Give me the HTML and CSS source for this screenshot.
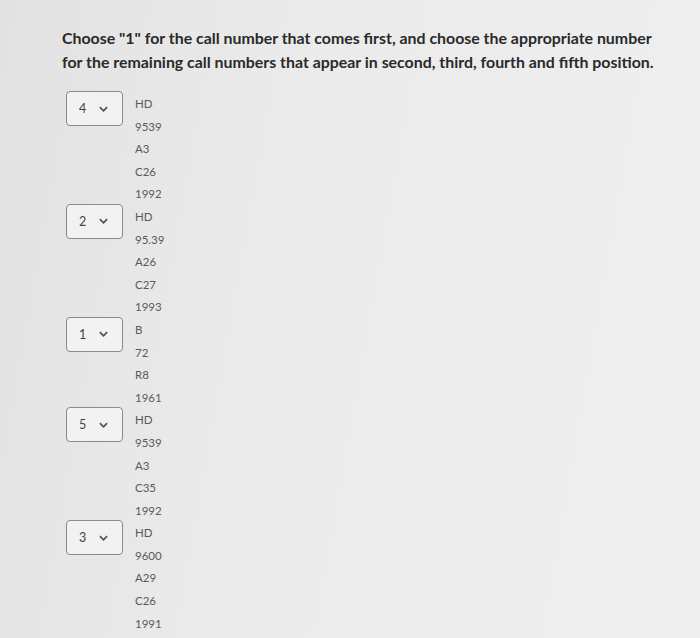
FILE: index.html
```html
<!DOCTYPE html>
<html>
<head>
<meta charset="utf-8">
<link rel="stylesheet" href="styles.css">
</head>
<body>
<div class="page">
  <p class="prompt">Choose "1" for the call number that comes first, and choose the appropriate number for the remaining call numbers that appear in second, third, fourth and fifth position.</p>
  <div class="items">
    <div class="item">
      <div class="select"><span>4</span><svg viewBox="0 0 10 6" class="chev"><path d="M1 1 L5 5 L9 1" /></svg></div>
      <div class="call"><div>HD</div><div>9539</div><div>A3</div><div>C26</div><div>1992</div></div>
    </div>
    <div class="item">
      <div class="select"><span>2</span><svg viewBox="0 0 10 6" class="chev"><path d="M1 1 L5 5 L9 1" /></svg></div>
      <div class="call"><div>HD</div><div>95.39</div><div>A26</div><div>C27</div><div>1993</div></div>
    </div>
    <div class="item">
      <div class="select"><span>1</span><svg viewBox="0 0 10 6" class="chev"><path d="M1 1 L5 5 L9 1" /></svg></div>
      <div class="call"><div>B</div><div>72</div><div>R8</div><div>1961</div></div>
    </div>
    <div class="item">
      <div class="select"><span>5</span><svg viewBox="0 0 10 6" class="chev"><path d="M1 1 L5 5 L9 1" /></svg></div>
      <div class="call"><div>HD</div><div>9539</div><div>A3</div><div>C35</div><div>1992</div></div>
    </div>
    <div class="item">
      <div class="select"><span>3</span><svg viewBox="0 0 10 6" class="chev"><path d="M1 1 L5 5 L9 1" /></svg></div>
      <div class="call"><div>HD</div><div>9600</div><div>A29</div><div>C26</div><div>1991</div></div>
    </div>
  </div>
</div>
</body>
</html>
```
FILE: styles.css
```css
html, body {
  margin: 0;
  padding: 0;
}
body {
  width: 700px;
  height: 638px;
  overflow: hidden;
  background: linear-gradient(100deg, #e2e2e2 0%, #ebebeb 40%, #efefef 100%);
  font-family: Lato, "Open Sans", sans-serif;
}
.page {
  padding: 26px 40px 0 62px;
}
.prompt {
  margin: 0;
  font-size: 15.9px;
  line-height: 24px;
  font-weight: 700;
  color: #2a2a2a;
  width: 596px;
}
.items {
  margin-top: 19px;
  display: flex;
  flex-direction: column;
}
.item {
  display: flex;
  align-items: flex-start;
}
.select {
  margin: -2px 0 0 4px;
  width: 57px;
  height: 35px;
  box-sizing: border-box;
  border: 1.5px solid #8a8a8a;
  border-radius: 4px;
  background: #f2f2f2;
  display: flex;
  align-items: center;
  padding-left: 12px;
  gap: 13px;
  font-size: 12.5px;
  color: #444;
}
.chev {
  width: 9px;
  height: 6px;
  fill: none;
  stroke: #555;
  stroke-width: 2;
}
.call {
  margin-left: 12px;
  display: flex;
  flex-direction: column;
  font-size: 11.5px;
  line-height: 22.6px;
  color: #5a5a5a;
}
```
